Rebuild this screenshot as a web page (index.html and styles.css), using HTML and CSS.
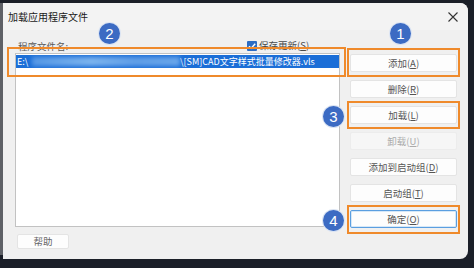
FILE: index.html
```html
<!DOCTYPE html>
<html lang="zh-CN">
<head>
<meta charset="utf-8">
<title>加载应用程序文件</title>
<link rel="stylesheet" href="styles.css">
</head>
<body>
<div class="screen">
  <div class="edge"></div>
  <div class="dialog">
    <div class="titlebar">
      <span class="title">加载应用程序文件</span>
      <svg class="close" width="10" height="10" viewBox="0 0 10 10"><path d="M0.5 0.5L9.5 9.5M9.5 0.5L0.5 9.5" stroke="#333" stroke-width="1.1" fill="none"/></svg>
    </div>
    <div class="body">
      <div class="left">
        <div class="header">
          <span class="label">程序文件名:</span>
          <span class="save">
            <span class="check"><svg width="10" height="10" viewBox="0 0 10 10"><path d="M2 5.2L4.2 7.3L8.2 2.8" stroke="#fff" stroke-width="1.4" fill="none"/></svg></span>
            <span>保存更新(<u>S</u>)</span>
          </span>
        </div>
        <div class="list">
          <div class="row selected">
            <span class="drive">E:\</span><span class="blur"></span><span class="fname">\[SM]CAD文字样式批量修改器.vls</span>
          </div>
        </div>
        <div class="footer">
          <button class="btn help">帮助</button>
        </div>
      </div>
      <div class="right">
        <button class="btn">添加(<u>A</u>)</button>
        <button class="btn">删除(<u>R</u>)</button>
        <button class="btn">加载(<u>L</u>)</button>
        <button class="btn disabled">卸载(<u>U</u>)</button>
        <button class="btn">添加到启动组(<u>D</u>)</button>
        <button class="btn">启动组(<u>T</u>)</button>
        <button class="btn default">确定(<u>O</u>)</button>
      </div>
    </div>
  </div>
  <div class="mark box-list"></div>
  <div class="mark box-add"></div>
  <div class="mark box-load"></div>
  <div class="mark box-ok"></div>
  <div class="num n1">1</div>
  <div class="num n2">2</div>
  <div class="num n3">3</div>
  <div class="num n4">4</div>
</div>
</body>
</html>
```
FILE: styles.css
```css
html, body {
  margin: 0;
  padding: 0;
  background: #1b1f28;
}
.screen {
  position: relative;
  width: 474px;
  height: 268px;
  padding: 3px 6px 0 3px;
  box-sizing: border-box;
  font-family: "Noto Sans CJK SC", "Liberation Sans", sans-serif;
}
.edge {
  position: absolute;
  left: 0;
  top: 3px;
  width: 3px;
  height: 252px;
  background: #5e6066;
}
.dialog {
  width: 465px;
  height: 256px;
  background: #f0f0f0;
  border-radius: 0 8px 8px 0;
  display: flex;
  flex-direction: column;
}
.titlebar {
  height: 27px;
  display: flex;
  align-items: center;
  justify-content: space-between;
  padding: 0 10px 0 5px;
  background: #f3f3f3;
  border-radius: 0 8px 0 0;
}
.title {
  font-size: 10px;
  color: #1a1a1a;
}
.close {
  display: block;
}
.body {
  display: grid;
  grid-template-columns: 325px 107px;
  column-gap: 10px;
  padding: 0 11px 0 12px;
  flex: 1;
}
.left {
  display: flex;
  flex-direction: column;
}
.header {
  height: 23px;
  display: flex;
  align-items: flex-end;
  padding-left: 3px;
  font-size: 9.5px;
  color: #5a5a5a;
  line-height: 13px;
  box-sizing: border-box;
}
.label {
  width: 229px;
}
.save {
  display: flex;
  align-items: center;
  gap: 2px;
  color: #4a4a4a;
  position: relative;
  top: -1px;
}
.check {
  width: 10px;
  height: 10px;
  background: #2b6cc4;
  border-radius: 1px;
  display: flex;
}
.list {
  height: 174px;
  background: #fff;
  border: 1px solid #c2c2c2;
  box-sizing: border-box;
  padding: 1px 0 0 0;
}
.row {
  height: 13px;
  display: flex;
  align-items: center;
  font-size: 9px;
  white-space: nowrap;
  overflow: hidden;
}
.selected {
  background: #1b6ed7;
  color: #fff;
}
.drive {
  width: 15px;
  padding-left: 1px;
}
.blur {
  width: 148px;
  height: 9px;
  background: linear-gradient(90deg, #5597e5, #7db4ee 40%, #619ee7 70%, #6aa6ea);
  filter: blur(2px);
}
.footer {
  padding: 7px 0 0 2px;
}
.btn {
  display: block;
  width: 100%;
  height: 18px;
  padding: 0;
  margin: 0;
  border: 1px solid #e4e4e4;
  border-radius: 2px;
  background: #fdfdfd;
  font-family: "Noto Sans CJK SC", "Liberation Sans", sans-serif;
  font-size: 9.5px;
  color: #555;
  line-height: 16px;
  text-align: center;
}
.btn u {
  text-decoration-thickness: 1px;
}
.help {
  width: 52px;
  height: 15px;
  line-height: 13px;
  color: #666;
}
.right {
  display: flex;
  flex-direction: column;
  gap: 8px;
  padding-top: 24px;
}
.disabled {
  color: #ababab;
  background: #f6f6f6;
  border-color: #ececec;
}
.default {
  border-color: #5a9ee0;
  box-shadow: inset 0 0 0 1px #d6e8f8;
}
.mark {
  position: absolute;
  border: 2px solid #ef8a2b;
  box-sizing: border-box;
}
.box-list { left: 7px; top: 47px; width: 339px; height: 30px; }
.box-add { left: 347px; top: 48px; width: 113px; height: 29px; }
.box-load { left: 347px; top: 101px; width: 113px; height: 28px; }
.box-ok { left: 347px; top: 205px; width: 113px; height: 29px; }
.num {
  position: absolute;
  width: 21px;
  height: 21px;
  border-radius: 50%;
  background: #3c6bc3;
  box-shadow: 0 0 0 1px #dbe4f3;
  color: #fff;
  font-family: "Liberation Sans", "DejaVu Sans", sans-serif;
  font-size: 15px;
  line-height: 21px;
  text-align: center;
}
.n1 { left: 390px; top: 23px; }
.n2 { left: 99px; top: 23px; }
.n3 { left: 323px; top: 106px; }
.n4 { left: 323px; top: 210px; }
```
